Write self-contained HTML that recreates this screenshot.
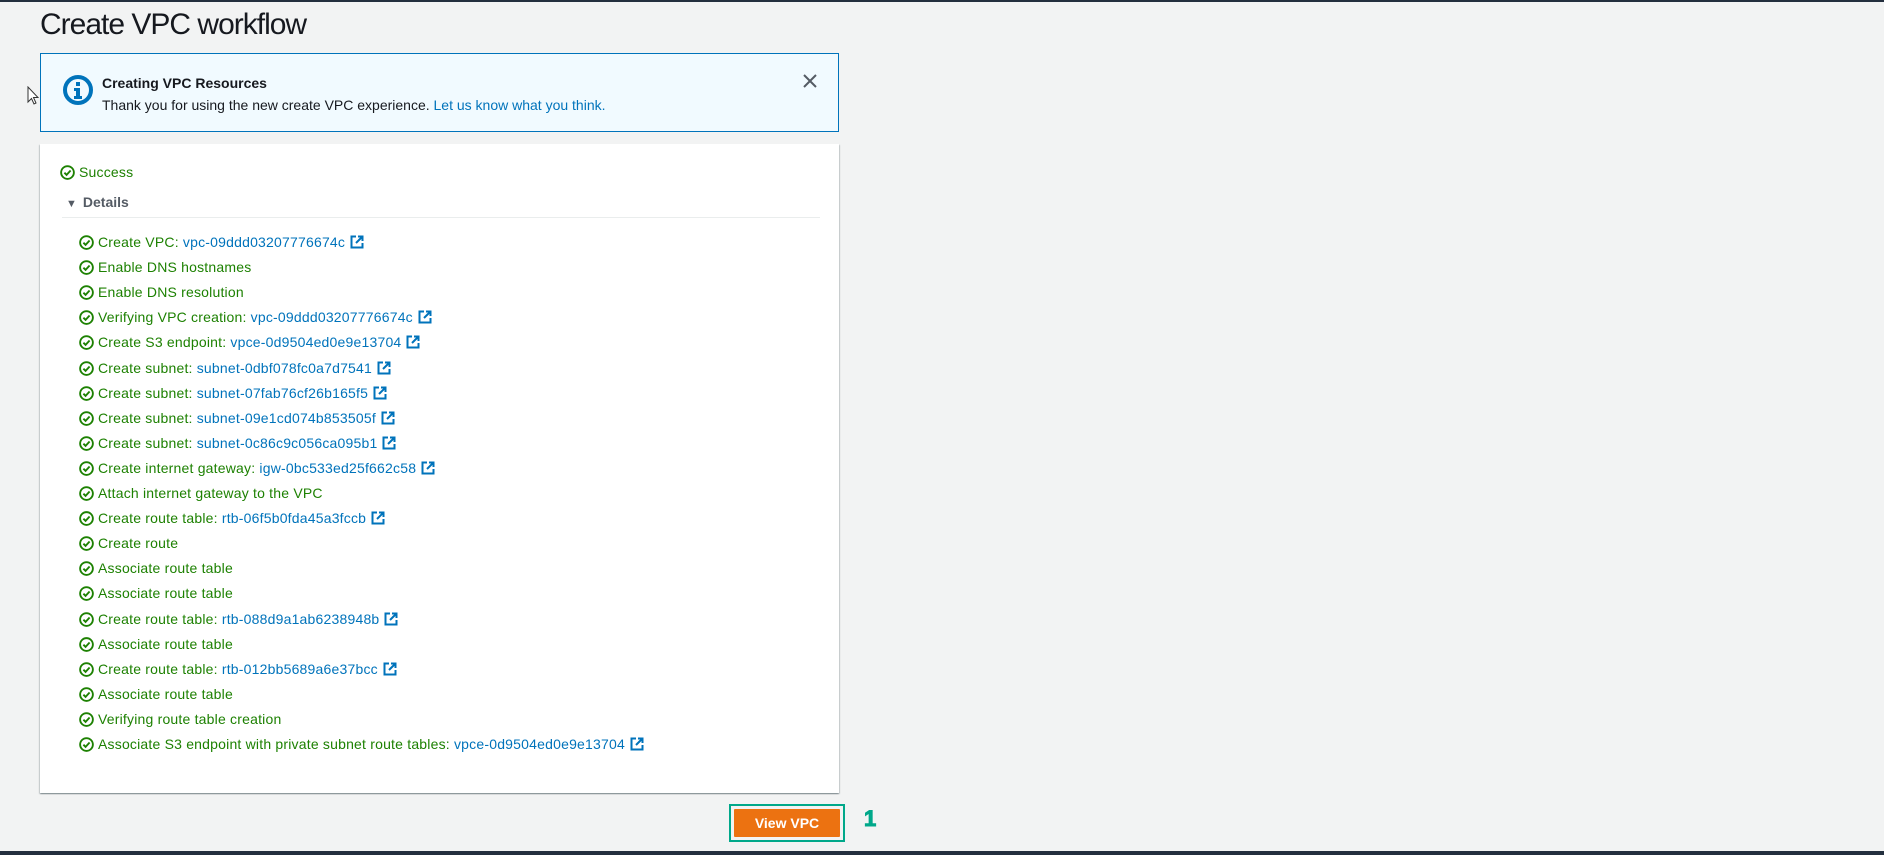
<!DOCTYPE html>
<html><head><meta charset="utf-8"><style>
body{margin:0;width:1884px;height:855px;background:#f2f3f3;font-family:"Liberation Sans",sans-serif;position:relative;overflow:hidden}
.top{position:absolute;left:0;top:0;width:1884px;height:2px;background:#232f3e}
.bot{position:absolute;left:0;top:851px;width:1884px;height:4px;background:#232f3e}
h1{position:absolute;left:40px;top:8px;margin:0;font-weight:normal;font-size:30px;color:#16191f;letter-spacing:-1px}
.info{position:absolute;left:40px;top:53px;width:797px;height:77px;border:1px solid #0073bb;background:#f1faff}
.info .t1{position:absolute;left:61px;top:21px;font-size:14px;font-weight:bold;color:#16191f}
.info .t2{position:absolute;left:61px;top:43px;font-size:14px;color:#16191f}
a{color:#0073bb;text-decoration:none}
.x{position:absolute;left:760px;top:18px}
.card{position:absolute;left:40px;top:144px;width:799px;height:649px;background:#fff;box-shadow:0 1px 1px rgba(0,28,36,.3),1px 1px 1px rgba(0,28,36,.15),-1px 1px 1px rgba(0,28,36,.15)}
.row{position:absolute;font-size:14px;color:#1d8102;height:20px;line-height:20px;white-space:nowrap;letter-spacing:0.2px}
.row svg.c{vertical-align:-3px;margin-right:4px}
.ext{vertical-align:-2px;margin-left:5px}
.det{position:absolute;left:26px;top:50px;font-size:14px;font-weight:bold;color:#545b64}
.line{position:absolute;left:22px;top:73px;width:758px;height:1px;background:#eaeded}
.btnbox{position:absolute;left:729px;top:804px;width:112px;height:34px;border:2px solid #00a88a}
.btn{position:absolute;left:3px;top:3px;width:106px;height:28px;background:#ec7211;color:#fff;font-weight:bold;font-size:14px;text-align:center;line-height:28px;border-radius:1px}
.num{position:absolute;left:864px;top:806px;font-size:22px;font-weight:900;color:#00a88a;-webkit-text-stroke:1px #00a88a;text-shadow:0 0 2px #fff}
</style></head><body>
<div class="top"></div>
<h1>Create VPC workflow</h1>
<svg style="position:absolute;left:27px;top:86px" width="12" height="20" viewBox="0 0 12 20"><path d="M1 1 L1 16 L4.5 12.5 L7 18 L9 17 L6.5 11.5 L11 11.5 Z" fill="#fff" stroke="#333" stroke-width="1"/></svg>
<div class="info">
<svg style="position:absolute;left:21px;top:20px" width="32" height="32" viewBox="0 0 32 32"><circle cx="16" cy="16" r="13" fill="none" stroke="#0073bb" stroke-width="4"/><rect x="14" y="8" width="4" height="4" fill="#0073bb"/><path d="M12 14h6v8h2v3h-8v-3h2v-5h-2z" fill="#0073bb"/></svg>
<div class="t1">Creating VPC Resources</div>
<div class="t2">Thank you for using the new create VPC experience. <a>Let us know what you think.</a></div>
<svg class="x" width="18" height="18" viewBox="0 0 18 18"><path d="M3 3L15 15M15 3L3 15" stroke="#545b64" stroke-width="2"/></svg>
</div>
<div class="card">
<div class="row" style="left:20px;top:18px"><svg class="c" width="15" height="15" viewBox="0 0 16 16"><circle cx="8" cy="8" r="6.8" fill="none" stroke="#1d8102" stroke-width="2"/><path d="M4.7 8.2l2.3 2.3 4.3-4.6" fill="none" stroke="#1d8102" stroke-width="2"/></svg>Success</div>
<div class="det"><span style="font-size:11px;margin-right:6px">&#9660;</span>Details</div>
<div class="line"></div>
<div id="rows"></div>
</div>
<div class="btnbox"><div class="btn">View VPC</div></div>
<div class="num">1</div>
<div class="bot"></div>
<script>
var items=[["Create VPC: ","vpc-09ddd03207776674c"],["Enable DNS hostnames"],["Enable DNS resolution"],["Verifying VPC creation: ","vpc-09ddd03207776674c"],["Create S3 endpoint: ","vpce-0d9504ed0e9e13704"],["Create subnet: ","subnet-0dbf078fc0a7d7541"],["Create subnet: ","subnet-07fab76cf26b165f5"],["Create subnet: ","subnet-09e1cd074b853505f"],["Create subnet: ","subnet-0c86c9c056ca095b1"],["Create internet gateway: ","igw-0bc533ed25f662c58"],["Attach internet gateway to the VPC"],["Create route table: ","rtb-06f5b0fda45a3fccb"],["Create route"],["Associate route table"],["Associate route table"],["Create route table: ","rtb-088d9a1ab6238948b"],["Associate route table"],["Create route table: ","rtb-012bb5689a6e37bcc"],["Associate route table"],["Verifying route table creation"],["Associate S3 endpoint with private subnet route tables: ","vpce-0d9504ed0e9e13704"]];
var chk='<svg class="c" width="15" height="15" viewBox="0 0 16 16"><circle cx="8" cy="8" r="6.8" fill="none" stroke="#1d8102" stroke-width="2"/><path d="M4.7 8.2l2.3 2.3 4.3-4.6" fill="none" stroke="#1d8102" stroke-width="2"/></svg>';
var ext='<svg class="ext" width="14" height="14" viewBox="0 0 14 14"><path d="M6 1.5H1.5v11h11V8" fill="none" stroke="#0073bb" stroke-width="2"/><path d="M8 1.5h4.5V6M12.5 1.5L6 8" fill="none" stroke="#0073bb" stroke-width="2"/></svg>';
var h='';for(var i=0;i<items.length;i++){var it=items[i];h+='<div class="row" style="left:39px;top:'+(88+i*25.1)+'px">'+chk+it[0]+(it[1]?'<a>'+it[1]+'</a>'+ext:'')+'</div>';}
document.getElementById('rows').innerHTML=h;
</script>
</body></html>
